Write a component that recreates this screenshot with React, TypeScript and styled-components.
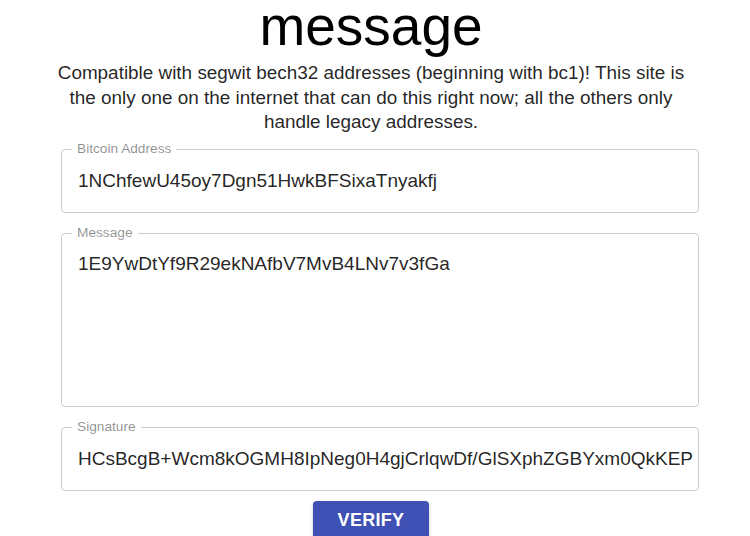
import styled, { createGlobalStyle } from "styled-components"

const GlobalStyle = createGlobalStyle`
  html, body {
    margin: 0;
    padding: 0;
    background: #ffffff;
    overflow: hidden;
  }
  body {
    font-family: "Liberation Sans", Arial, sans-serif;
    color: rgba(0, 0, 0, 0.87);
  }
`

const Page = styled.div`
  display: flex;
  flex-direction: column;
  align-items: center;
  width: 742px;
  height: 536px;
  overflow: hidden;
  box-sizing: border-box;
`

const Title = styled.h1`
  margin: 0;
  font-size: 55px;
  font-weight: 400;
  line-height: 52px;
  color: #000;
`

const Intro = styled.p`
  margin: 9px 0 0;
  width: 640px;
  font-size: 18.9px;
  line-height: 24.5px;
  text-align: center;
  color: rgba(0, 0, 0, 0.87);
`

const Form = styled.form`
  display: flex;
  flex-direction: column;
  align-items: center;
  gap: 20px;
  width: 638px;
  margin: 14px 0 0 18px;
`

const Field = styled.div<{ $tall?: boolean }>`
  position: relative;
  width: 100%;
  height: ${({ $tall }) => ($tall ? "174px" : "64px")};
  box-sizing: border-box;
  padding: ${({ $tall }) => ($tall ? "19px 2px 0 16px" : "0 2px 0 16px")};
  display: flex;
  align-items: ${({ $tall }) => ($tall ? "flex-start" : "center")};
  border: 1px solid rgba(0, 0, 0, 0.2);
  border-radius: 4px;
`

const Label = styled.span`
  position: absolute;
  top: -9px;
  left: 10px;
  padding: 0 5px;
  background: #fff;
  font-size: 13.7px;
  line-height: 16px;
  color: rgba(0, 0, 0, 0.45);
`

const Value = styled.div`
  font-size: 19px;
  line-height: 22px;
  color: rgba(0, 0, 0, 0.87);
  white-space: nowrap;
  overflow: hidden;
`

const VerifyButton = styled.button`
  margin: -10px 0 0 -18px;
  width: 116px;
  height: 40px;
  border: none;
  border-radius: 4px;
  background: #3f51b5;
  color: #fff;
  font-family: "Liberation Sans", Arial, sans-serif;
  font-size: 18px;
  font-weight: 700;
  letter-spacing: 0.3px;
  text-transform: uppercase;
  box-shadow: 0 3px 1px -2px rgba(0, 0, 0, 0.2), 0 2px 2px 0 rgba(0, 0, 0, 0.14),
    0 1px 5px 0 rgba(0, 0, 0, 0.12);
`

const fields = [
  { label: "Bitcoin Address", value: "1NChfewU45oy7Dgn51HwkBFSixaTnyakfj" },
  { label: "Message", value: "1E9YwDtYf9R29ekNAfbV7MvB4LNv7v3fGa", tall: true },
  {
    label: "Signature",
    value: "HCsBcgB+Wcm8kOGMH8IpNeg0H4gjCrlqwDf/GlSXphZGBYxm0QkKEP",
  },
]

export default function App() {
  return (
    <Page>
      <GlobalStyle />
      <Title>message</Title>
      <Intro>
        Compatible with segwit bech32 addresses (beginning with bc1)! This site
        is the only one on the internet that can do this right now; all the
        others only handle legacy addresses.
      </Intro>
      <Form>
        {fields.map((f) => (
          <Field key={f.label} $tall={f.tall}>
            <Label>{f.label}</Label>
            <Value>{f.value}</Value>
          </Field>
        ))}
        <VerifyButton type="button">Verify</VerifyButton>
      </Form>
    </Page>
  )
}
